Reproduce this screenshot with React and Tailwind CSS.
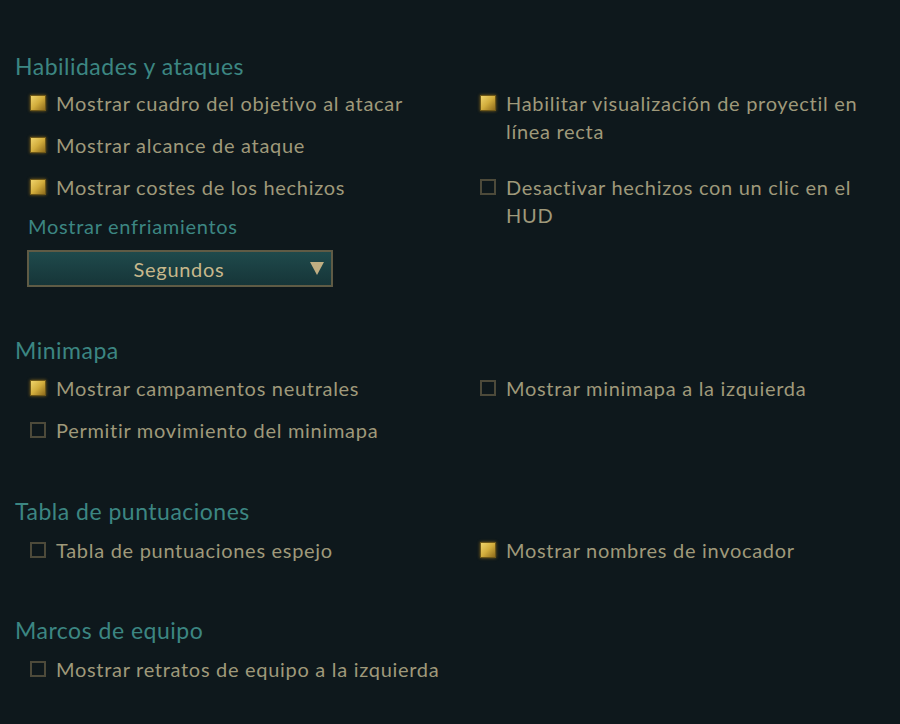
import React from 'react';

const Box = ({ on }) =>
  on ? (
    <span className="mt-[6px] w-[16px] h-[16px] shrink-0 border border-[#6d5719] bg-gradient-to-br from-[#f0d46a] via-[#d2ad3c] to-[#8f6c1c] shadow-[0_0_3px_#7a5f1a]" />
  ) : (
    <span className="mt-[6px] w-[16px] h-[16px] shrink-0 border-2 border-[#4d4a3a]" />
  );

const Item = ({ on, children }) => (
  <div className="flex items-start gap-[10px]">
    <Box on={on} />
    <span className="leading-[28px]">{children}</span>
  </div>
);

const Heading = ({ children, className }) => (
  <h2 className={'text-[23px] leading-[30px] tracking-[0.5px] text-[#3c8682] ' + className}>{children}</h2>
);

export default function App() {
  return (
    <div
      className="w-[900px] h-[724px] bg-[#0e181c] pl-[15px] pt-[51px] text-[20px] tracking-[0.7px] text-[#9f997a]"
      style={{ fontFamily: 'Lato, "Open Sans", sans-serif' }}
    >
      {/* Habilidades y ataques */}
      <Heading>Habilidades y ataques</Heading>
      <div className="grid grid-cols-[450px_420px] pl-[15px] mt-[8px]">
        <div className="flex flex-col gap-[14px]">
          <Item on>Mostrar cuadro del objetivo al atacar</Item>
          <Item on>Mostrar alcance de ataque</Item>
          <Item on>Mostrar costes de los hechizos</Item>
          <div className="-mt-[3px] -ml-[2px] leading-[28px] text-[#3c8682]">Mostrar enfriamientos</div>
          <div className="-mt-[4px] -ml-[3px] w-[306px] h-[37px] border-2 border-[#5f5b45] bg-gradient-to-b from-[#1f4a4c] to-[#163538] flex items-center relative">
            <span className="flex-1 text-center text-[#c7b88c] pr-[2px]">Segundos</span>
            <svg className="absolute right-[6px] top-[9px]" width="16" height="15" viewBox="0 0 16 15">
              <path d="M1 1 H15 L8 14 Z" fill="#bfae82" />
            </svg>
          </div>
        </div>
        <div className="flex flex-col gap-[28px]">
          <Item on>
            Habilitar visualización de proyectil en
            <br />
            línea recta
          </Item>
          <Item>
            Desactivar hechizos con un clic en el
            <br />
            HUD
          </Item>
        </div>
      </div>

      {/* Minimapa */}
      <Heading className="mt-[48px]">Minimapa</Heading>
      <div className="grid grid-cols-[450px_420px] pl-[15px] mt-[9px]">
        <div className="flex flex-col gap-[14px]">
          <Item on>Mostrar campamentos neutrales</Item>
          <Item>Permitir movimiento del minimapa</Item>
        </div>
        <div className="flex flex-col">
          <Item>Mostrar minimapa a la izquierda</Item>
        </div>
      </div>

      {/* Tabla de puntuaciones */}
      <Heading className="mt-[52px]">Tabla de puntuaciones</Heading>
      <div className="grid grid-cols-[450px_420px] pl-[15px] mt-[10px]">
        <Item>Tabla de puntuaciones espejo</Item>
        <Item on>Mostrar nombres de invocador</Item>
      </div>

      {/* Marcos de equipo */}
      <Heading className="mt-[51px]">Marcos de equipo</Heading>
      <div className="pl-[15px] mt-[10px]">
        <Item>Mostrar retratos de equipo a la izquierda</Item>
      </div>
    </div>
  );
}
